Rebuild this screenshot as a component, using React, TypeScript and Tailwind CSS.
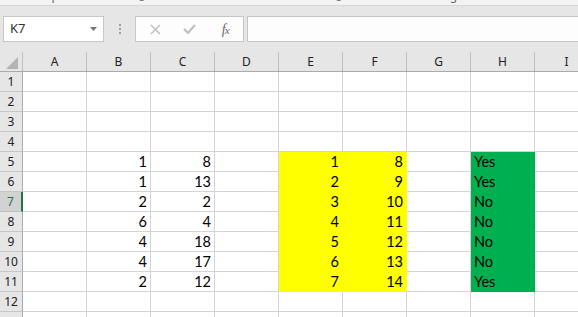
import React from "react";

const COLS = ["A", "B", "C", "D", "E", "F", "G", "H", "I"];

const B_VALS = [1, 1, 2, 6, 4, 4, 2];
const C_VALS = [8, 13, 2, 4, 18, 17, 12];
const H_VALS = ["Yes", "Yes", "No", "No", "No", "No", "Yes"];

type Cell = { text?: string | number; align?: "left" | "right"; fill?: "yellow" | "green" };

function cellFor(row: number, col: string): Cell {
  const i = row - 5;
  const inData = i >= 0 && i < 7;
  if (!inData) return {};
  switch (col) {
    case "B":
      return { text: B_VALS[i], align: "right" };
    case "C":
      return { text: C_VALS[i], align: "right" };
    case "E":
      return { text: i + 1, align: "right", fill: "yellow" };
    case "F":
      return { text: i + 8, align: "right", fill: "yellow" };
    case "H":
      return { text: H_VALS[i], align: "left", fill: "green" };
    default:
      return {};
  }
}

function RibbonStrip() {
  return (
    <div className="h-[6px] bg-[#f3f3f3] border-b border-[#d6d6d6] overflow-hidden text-[12px] leading-[14px] text-[#666] font-['Segoe_UI','Noto_Sans',sans-serif]">
      <div className="flex -mt-[11px] whitespace-nowrap">
        <span className="w-[136px] text-center">Clipboard</span>
        <span className="w-[24px] text-center">⌟</span>
        <span className="w-[180px] text-center">Font</span>
        <span className="w-[28px] text-center">⌟</span>
        <span className="w-[236px] text-center">Alignment</span>
      </div>
    </div>
  );
}

function FormulaBar() {
  return (
    <div className="bg-[#e6e6e6] h-[46px] pt-[10px] flex items-start">
      {/* Name box */}
      <div className="ml-[3px] w-[101px] h-[26px] bg-white border border-[#c6c6c6] flex items-center pl-[6px] pr-[6px]">
        <span className="flex-1 text-[13px] text-[#333] font-['Segoe_UI','Noto_Sans',sans-serif]">K7</span>
        <svg width="7" height="4" viewBox="0 0 7 4">
          <polygon points="0,0 7,0 3.5,4" fill="#777" />
        </svg>
      </div>
      {/* grip dots */}
      <div className="w-[31px] h-[26px] flex flex-col items-center justify-center gap-[2px]">
        <span className="w-[2px] h-[2px] bg-[#a0a0a0]" />
        <span className="w-[2px] h-[2px] bg-[#a0a0a0]" />
        <span className="w-[2px] h-[2px] bg-[#a0a0a0]" />
      </div>
      {/* cancel / enter / fx */}
      <div className="w-[109px] h-[26px] bg-[#fdfdfd] border border-[#c6c6c6] flex items-center">
        <div className="w-[36px] flex justify-center pl-[4px]">
          <svg width="11" height="11" viewBox="0 0 11 11">
            <path d="M1 1 L10 10 M10 1 L1 10" stroke="#bdbdbd" strokeWidth="1.4" fill="none" />
          </svg>
        </div>
        <div className="w-[36px] flex justify-center">
          <svg width="13" height="10" viewBox="0 0 13 10">
            <path d="M1 5 L5 9 L12 1" stroke="#bdbdbd" strokeWidth="2" fill="none" />
          </svg>
        </div>
        <div className="w-[36px] flex justify-center">
          <span className="italic text-[14px] text-[#666] font-['Liberation_Serif',serif] tracking-[-1px]">
            f<span className="text-[11px]">x</span>
          </span>
        </div>
      </div>
      {/* formula input */}
      <div className="ml-[3px] flex-1 h-[26px] bg-[#fdfdfd] border border-[#c6c6c6] border-r-0" />
    </div>
  );
}

function HeaderRow() {
  return (
    <div className="flex h-[20px] bg-[#e6e6e6] border-b border-[#ababab] text-[12px] text-[#222] font-['Segoe_UI','Noto_Sans',sans-serif]">
      <div className="w-[23px] shrink-0 border-r border-[#c0c0c0] relative">
        <svg width="23" height="19" viewBox="0 0 23 19" className="block">
          <polygon points="18,5 18,17 6,17" fill="#b4b4b4" />
        </svg>
      </div>
      {COLS.map((c) => (
        <div
          key={c}
          className="w-[64px] shrink-0 border-r border-[#c0c0c0] flex items-center justify-center"
        >
          {c}
        </div>
      ))}
    </div>
  );
}

function Row({ n }: { n: number }) {
  const selected = n === 7;
  return (
    <div className="flex h-[20px]">
      <div
        className={
          selected
            ? "w-[23px] shrink-0 bg-[#d2d2d2] border-r-2 border-[#217346] border-b border-b-[#c0c0c0] flex items-center justify-center text-[12px] text-[#217346] font-['Segoe_UI','Noto_Sans',sans-serif]"
            : "w-[23px] shrink-0 bg-[#e6e6e6] border-r border-[#ababab] border-b border-b-[#c6c6c6] flex items-center justify-center text-[12px] text-[#222] font-['Segoe_UI','Noto_Sans',sans-serif]"
        }
      >
        {n}
      </div>
      {COLS.map((c) => {
        const cell = cellFor(n, c);
        const fillCls =
          cell.fill === "yellow"
            ? "bg-[#ffff00] border-[#ffff00]"
            : cell.fill === "green"
            ? "bg-[#00b050] border-[#00b050]"
            : "bg-white border-[#d4d4d4]";
        return (
          <div
            key={c}
            className={
              "w-[64px] shrink-0 border-r border-b flex items-end pb-[1px] text-[14.5px] leading-[16px] text-black font-['Lato','Open_Sans',sans-serif] " +
              fillCls +
              (cell.align === "right" ? " justify-end pr-[3px]" : " justify-start pl-[3px]")
            }
          >
            {cell.text}
          </div>
        );
      })}
    </div>
  );
}

export default function App() {
  const rows = Array.from({ length: 13 }, (_, i) => i + 1);
  return (
    <div className="w-[578px] h-[317px] overflow-hidden bg-white">
      <RibbonStrip />
      <FormulaBar />
      <div className="w-[600px]">
        <HeaderRow />
        {rows.map((n) => (
          <Row key={n} n={n} />
        ))}
      </div>
    </div>
  );
}
